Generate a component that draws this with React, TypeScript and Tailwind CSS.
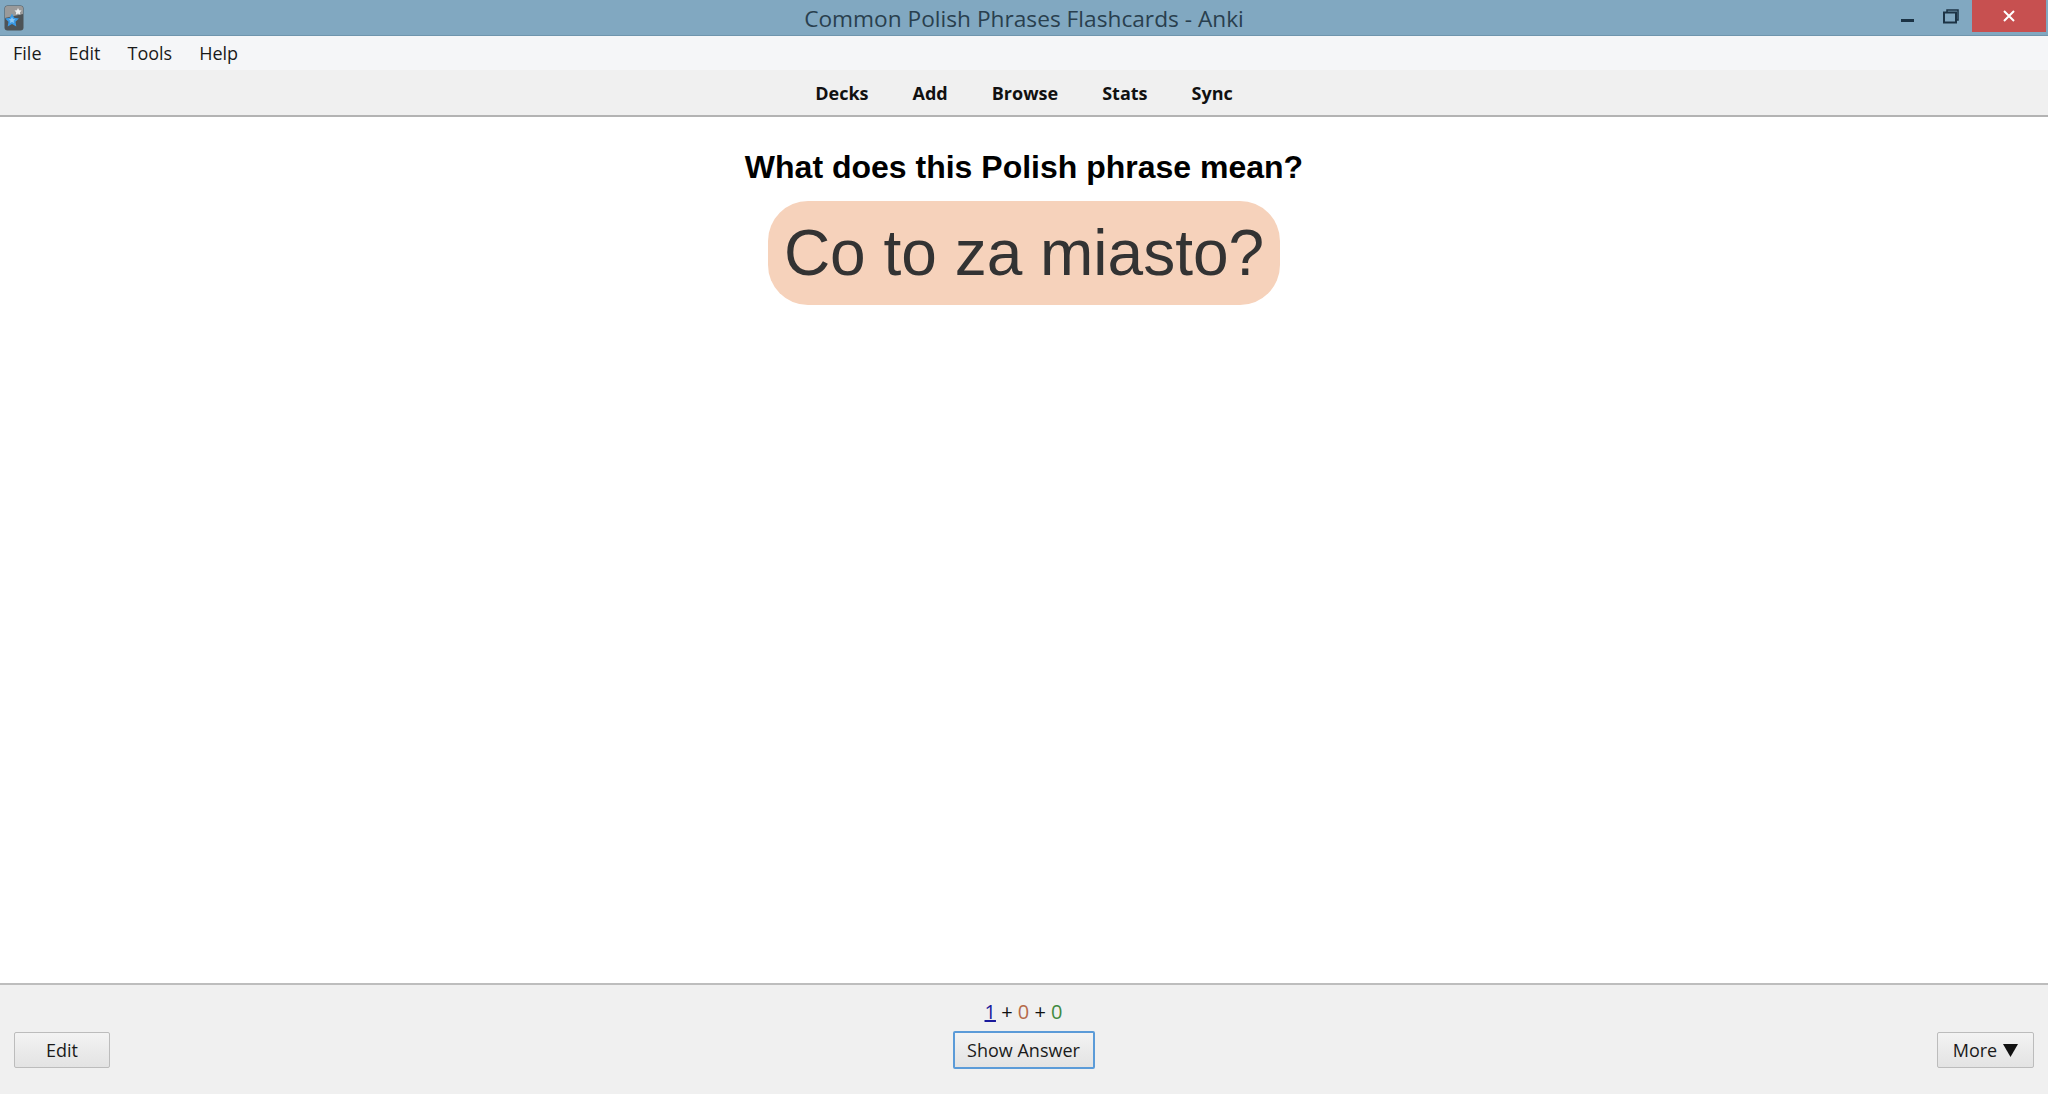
const UI_FONT = "font-['Open_Sans','Noto_Sans',sans-serif]"

const MENUS = ['File', 'Edit', 'Tools', 'Help']
const LINKS = ['Decks', 'Add', 'Browse', 'Stats', 'Sync']

function AppIcon() {
  return (
    <svg width="20" height="26" viewBox="0 0 20 26">
      <rect x="0.5" y="0.5" width="19" height="25" rx="3" fill="#4d5357" />
      <path d="M1 3q0-2 2-2h14q2 0 2 2v6L1 13z" fill="#9a9a9a" />
      <path d="M14 3l1.200 2.200 2.400.4-1.700 1.700.4 2.400-2.300-1.100-2.200 1.100.4-2.400-1.700-1.700 2.400-.4z" fill="#eceef0" />
      <path d="M8 8.500l2.200 4.300 4.700.7-3.400 3.300.8 4.700L8 19l-4.300 2.500.8-4.700L1.100 13.500l4.700-.7z" fill="#3a9ae6" />
      <path d="M8 12l1 2 2.200.3-1.600 1.500.4 2.200-2-1-2 1 .4-2.200-1.600-1.500 2.200-.3z" fill="#8cc6f2" />
    </svg>
  )
}

function WindowControls() {
  return (
    <div className="flex items-start">
      <div className="w-[28px] h-[35px] flex items-end pb-[13px] justify-center mr-[22px]">
        <div className="w-[13px] h-[3px] bg-[#1c3345]" />
      </div>
      <svg width="16" height="15" viewBox="0 0 16 15" className="mt-[9px] mr-[13px]" fill="none" stroke="#1c3345">
        <path d="M4 3V1h11v10h-2" strokeWidth="1.500" />
        <rect x="1" y="3.500" width="12" height="10" strokeWidth="2" />
      </svg>
      <div className="w-[74px] h-[32px] bg-[#c75050] flex items-center justify-center mr-[2px]">
        <svg width="12" height="12" viewBox="0 0 12 12" stroke="#ffffff" strokeWidth="2">
          <path d="M1 1l10 10M11 1L1 11" />
        </svg>
      </div>
    </div>
  )
}

function BarButton({ focused, width, children }: { focused?: boolean; width: string; children: React.ReactNode }) {
  return (
    <button
      className={`${width} flex items-center justify-center rounded-[2px] bg-gradient-to-b from-[#f3f3f3] to-[#e3e3e3] text-[18px] text-[#1a1a1a] ${
        focused ? 'h-[38px] border-[2px] border-[#5b9bd8]' : 'h-[36px] border border-[#bcbcbc]'
      }`}
    >
      {children}
    </button>
  )
}

export default function App() {
  return (
    <div className={`h-[1094px] flex flex-col bg-white ${UI_FONT}`}>
      {/* Title bar */}
      <div className="relative h-[36px] bg-[#81a8c1] border-b border-[#6f95ad] flex justify-between">
        <div className="pl-[4px] pt-[5px]">
          <AppIcon />
        </div>
        <div className="absolute inset-x-0 top-[1px] h-[36px] flex items-center justify-center text-[22.7px] text-[#293f4e] pointer-events-none">
          Common Polish Phrases Flashcards - Anki
        </div>
        <WindowControls />
      </div>

      {/* Menu bar */}
      <div className="h-[34px] bg-[#f5f6f8] flex items-center pl-[13px] gap-[27px] text-[18px] text-[#1a1a1a]">
        {MENUS.map((m) => (
          <span key={m}>{m}</span>
        ))}
      </div>

      {/* Toolbar */}
      <div className="h-[47px] pt-[2px] bg-[#f0f0f0] border-b-2 border-[#b3b3b3] flex items-center justify-center gap-[44px] text-[18px] font-bold text-[#111111]">
        {LINKS.map((l) => (
          <span key={l}>{l}</span>
        ))}
      </div>

      {/* Card */}
      <div className="flex-1 flex flex-col items-center font-['Liberation_Sans',Arial,sans-serif]">
        <h1 className="mt-[30px] text-[32px] leading-[40px] font-bold text-black">What does this Polish phrase mean?</h1>
        <div className="mt-[14px] w-[512px] h-[104px] rounded-[40px] bg-[#f6d2bb] flex items-center justify-center text-[64px] text-[#333333]">
          Co to za miasto?
        </div>
      </div>

      {/* Bottom bar */}
      <div className="h-[111px] bg-[#f0f0f0] border-t-2 border-[#bdbdbd] px-[14px] flex justify-between items-start">
        <div className="pt-[47px]">
          <BarButton width="w-[96px]">Edit</BarButton>
        </div>
        <div className="flex flex-col items-center pt-[13px]">
          <div className="h-[33px] text-[20px] leading-[28px] text-[#111111] whitespace-pre">
            <span className="text-[#1a1a9c] underline">1</span> + <span className="text-[#b5694a]">0</span> + <span className="text-[#3f8a3f]">0</span>
          </div>
          <BarButton focused width="w-[142px]">Show Answer</BarButton>
        </div>
        <div className="pt-[47px]">
          <BarButton width="w-[97px]">
            More
            <svg width="15" height="13" viewBox="0 0 15 13" className="ml-[6px]">
              <path d="M0 0h15L7.500 13z" fill="#111111" />
            </svg>
          </BarButton>
        </div>
      </div>
    </div>
  )
}
